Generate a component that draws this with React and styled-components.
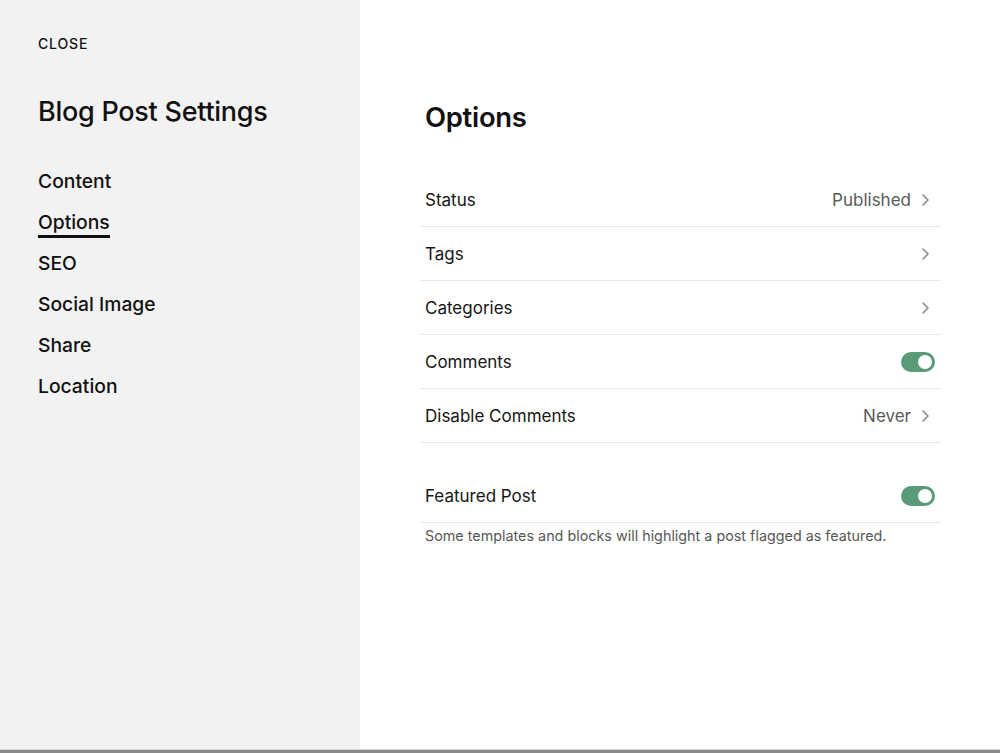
import styled, {createGlobalStyle} from 'styled-components';

const GlobalStyle = createGlobalStyle`
    html, body {
        margin: 0;
        padding: 0;
        height: 100%;
    }
    body {
        font-family: Inter, "Noto Sans", sans-serif;
        color: #111;
        -webkit-font-smoothing: antialiased;
    }
`;

const Page = styled.div`
    height: 753px;
    display: flex;
    flex-direction: column;
    overflow: hidden;
`;

const Main = styled.div`
    flex: 1;
    display: flex;
`;

const Sidebar = styled.aside`
    width: 360px;
    background: #f2f2f2;
    padding: 33px 0 0 38px;
    box-sizing: border-box;
`;

const CloseButton = styled.button`
    all: unset;
    font-size: 14px;
    font-weight: 500;
    letter-spacing: 0.06em;
    line-height: 16px;
    cursor: pointer;
`;

const SidebarTitle = styled.h1`
    margin: 43px 0 0;
    font-size: 27px;
    font-weight: 500;
    line-height: 32px;
    letter-spacing: -0.01em;
`;

const Nav = styled.nav`
    margin-top: 40px;
    display: flex;
    flex-direction: column;
    align-items: flex-start;
    gap: 15px;
`;

const NavItem = styled.a`
    font-size: 19.3px;
    font-weight: 500;
    line-height: 26px;
    color: #111;
    text-decoration: none;
    border-bottom: 3px solid ${({$active}) => ($active ? '#111' : 'transparent')};
    margin-bottom: -3px;
`;

const Content = styled.section`
    flex: 1;
    background: #fff;
    padding: 100px 59px 0 60px;
`;

const Heading = styled.h2`
    margin: 0 0 39px 5px;
    font-size: 27.4px;
    font-weight: 600;
    line-height: 34px;
    letter-spacing: -0.01em;
`;

const List = styled.div`
    display: flex;
    flex-direction: column;
`;

const Row = styled.div`
    height: 53px;
    display: flex;
    align-items: center;
    justify-content: space-between;
    padding: 0 6px 0 5px;
    border-bottom: 1px solid #e6e6e6;
    margin-top: ${({$spaced}) => ($spaced ? '26px' : '0')};
`;

const Label = styled.span`
    font-size: 17px;
    line-height: 22px;
    color: #161616;
`;

const Value = styled.span`
    display: flex;
    align-items: center;
    gap: 9px;
    padding-right: 5px;
    font-size: 17px;
    color: #5a5a5a;
`;

const Hint = styled.p`
    margin: 4px 0 0 5px;
    font-size: 14.35px;
    line-height: 18px;
    color: #575757;
`;

const Switch = styled.span`
    width: 34px;
    height: 20px;
    border-radius: 10px;
    background: ${({$on}) => ($on ? '#5a9b77' : '#cfcfcf')};
    display: flex;
    align-items: center;
    justify-content: ${({$on}) => ($on ? 'flex-end' : 'flex-start')};
    padding: 0 3px;
    box-sizing: border-box;

    &::after {
        content: '';
        width: 14px;
        height: 14px;
        border-radius: 50%;
        background: #fff;
    }
`;

const BottomStrip = styled.div`
    height: 3px;
    background: #8a8a8a;
    border-top: 1px solid #d6d6d6;
`;

const Chevron = () => (
    <svg width="10" height="14" viewBox="0 0 10 14" fill="none">
        <path d="M3 2l5 5-5 5" stroke="#8a8a8a" strokeWidth="1.6" strokeLinecap="round" strokeLinejoin="round"/>
    </svg>
);

const navItems = ['Content', 'Options', 'SEO', 'Social Image', 'Share', 'Location'];

export default function App() {
    return (
        <Page>
            <GlobalStyle/>
            <Main>
                <Sidebar>
                    <CloseButton>CLOSE</CloseButton>
                    <SidebarTitle>Blog Post Settings</SidebarTitle>
                    <Nav>
                        {navItems.map((item) => (
                            <NavItem key={item} href="#" $active={item === 'Options'}>{item}</NavItem>
                        ))}
                    </Nav>
                </Sidebar>
                <Content>
                    <Heading>Options</Heading>
                    <List>
                        <Row>
                            <Label>Status</Label>
                            <Value>Published <Chevron/></Value>
                        </Row>
                        <Row>
                            <Label>Tags</Label>
                            <Value><Chevron/></Value>
                        </Row>
                        <Row>
                            <Label>Categories</Label>
                            <Value><Chevron/></Value>
                        </Row>
                        <Row>
                            <Label>Comments</Label>
                            <Switch $on/>
                        </Row>
                        <Row>
                            <Label>Disable Comments</Label>
                            <Value>Never <Chevron/></Value>
                        </Row>
                        <Row $spaced>
                            <Label>Featured Post</Label>
                            <Switch $on/>
                        </Row>
                        <Hint>Some templates and blocks will highlight a post flagged as featured.</Hint>
                    </List>
                </Content>
            </Main>
            <BottomStrip/>
        </Page>
    );
}
